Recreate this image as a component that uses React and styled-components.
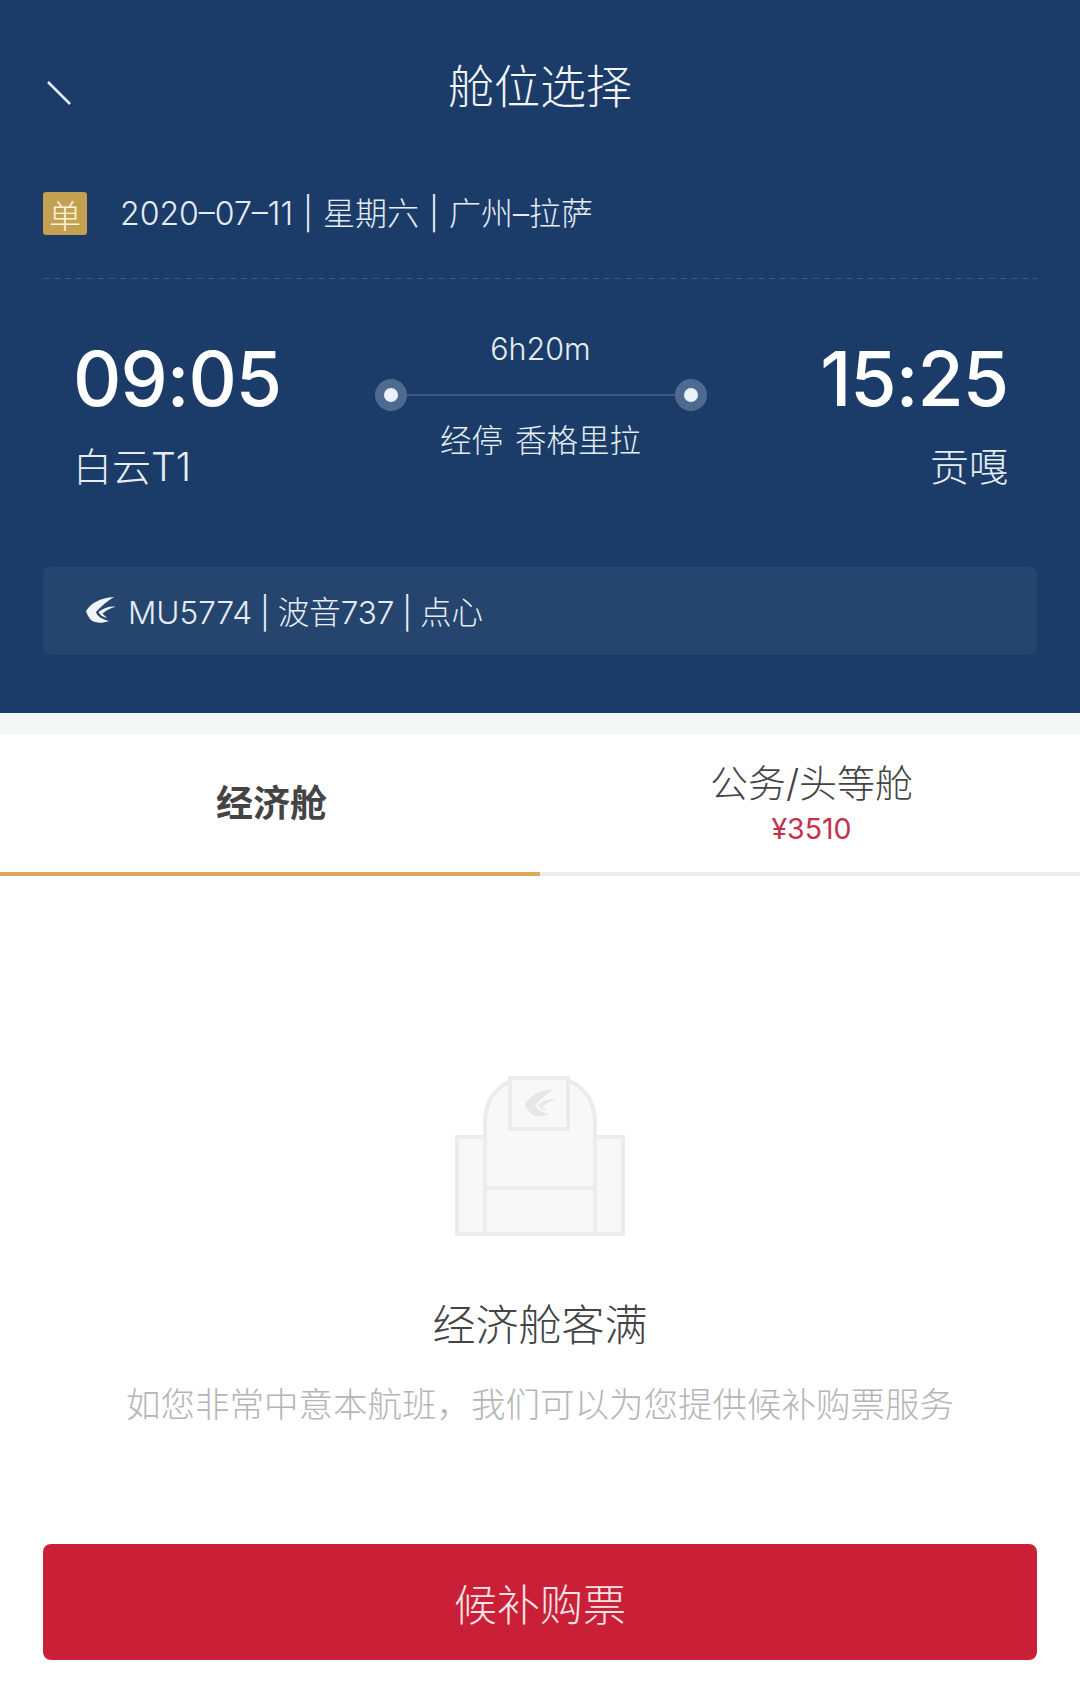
import React from "react";
import styled, { createGlobalStyle } from "styled-components";

const GlobalStyle = createGlobalStyle`
  html, body {
    margin: 0;
    padding: 0;
    background: #fff;
    font-family: Inter, "Noto Sans CJK SC", sans-serif;
    font-weight: 300;
  }
  * { box-sizing: border-box; }
`;

const Swallow = ({ color, size }) => (
  <svg width={size} height={size * 0.87} viewBox="0 0 30 26" fill={color}>
    <path d="M0 14C5 6 14 1 28 0C21 4 16 9 12 13L10 15C11 19 15 22 23 24C16 27 9 26 5 23C3 21 1 17 0 14Z" />
    <path d="M12.500 15C17 11 23 9 30 9.500C24 11.500 19 14 16.500 16.500C17.500 17.800 19 19 21 20.500C17 20.500 14 18 12.500 15Z" />
  </svg>
);

const SeatIcon = () => (
  <SeatSvg width="170" height="160" viewBox="0 0 170 160">
    <g fill="#f8f8f8" stroke="#ececec" strokeWidth="4">
      <rect x="2" y="61" width="30" height="97" />
      <rect x="138" y="61" width="30" height="97" />
      <path d="M30 158V46C30 20 48 2 72 2H98C122 2 140 20 140 46V158Z" />
      <path d="M55 2H113V53H55Z" />
      <path d="M30 112H140" />
    </g>
    <g transform="translate(70 13) scale(1.05)">
      <Swallow color="#e6e6e6" size={30} />
    </g>
  </SeatSvg>
);

const App = () => (
  <>
    <GlobalStyle />
    <Page>
      <Header>
        <TitleBar>
          <BackMark width="24" height="24" viewBox="0 0 24 24">
            <path d="M1 1L23 23" stroke="#e8eef5" strokeWidth="2.500" />
          </BackMark>
          <Title>舱位选择</Title>
        </TitleBar>
        <RouteRow>
          <Badge>单</Badge>
          <RouteText>2020–07–11 | 星期六 | 广州–拉萨</RouteText>
        </RouteRow>
        <Divider />
        <Schedule>
          <Stop>
            <Time>09:05</Time>
            <Airport>白云T1</Airport>
          </Stop>
          <Middle>
            <Duration>6h20m</Duration>
            <Track>
              <Dot />
              <TrackLine />
              <Dot />
            </Track>
            <Via>经停 香格里拉</Via>
          </Middle>
          <Stop $right>
            <Time>15:25</Time>
            <Airport>贡嘎</Airport>
          </Stop>
        </Schedule>
        <FlightBar>
          <Swallow color="#f2f5f8" size={30} />
          <span>MU5774 | 波音737 | 点心</span>
        </FlightBar>
      </Header>
      <Band />
      <Tabs>
        <Tab $active>
          <TabName $active>经济舱</TabName>
        </Tab>
        <Tab>
          <TabName>公务/头等舱</TabName>
          <TabPrice>¥3510</TabPrice>
        </Tab>
      </Tabs>
      <Empty>
        <SeatIcon />
        <EmptyTitle>经济舱客满</EmptyTitle>
        <EmptyText>如您非常中意本航班，我们可以为您提供候补购票服务</EmptyText>
      </Empty>
      <Footer>
        <WaitButton>候补购票</WaitButton>
      </Footer>
    </Page>
  </>
);

const Page = styled.div`
  width: 1080px;
  height: 1682px;
  overflow: hidden;
  background: #fff;
`;

const Header = styled.header`
  height: 713px;
  padding: 0 43px;
  background: #1b3c69;
  color: #e6edf4;
`;

const TitleBar = styled.div`
  position: relative;
  height: 170px;
  padding-bottom: 4px;
  display: flex;
  align-items: center;
  justify-content: center;
`;

const BackMark = styled.svg`
  position: absolute;
  left: 4px;
  top: 81px;
`;

const Title = styled.h1`
  margin: 0;
  font-size: 46px;
  font-weight: 300;
  color: #f4f6f9;
`;

const RouteRow = styled.div`
  display: flex;
  align-items: center;
  gap: 33px;
  height: 43px;
  margin: 22px 0 43px;
`;

const Badge = styled.div`
  width: 44px;
  height: 43px;
  display: flex;
  align-items: center;
  justify-content: center;
  border-radius: 3px;
  background: #c4a052;
  color: #fff4d8;
  font-size: 32px;
`;

const RouteText = styled.div`
  font-size: 32px;
  line-height: 43px;
  white-space: pre;
  word-spacing: 1px;
`;

const Divider = styled.div`
  height: 1px;
  background: repeating-linear-gradient(
    90deg,
    rgba(255, 255, 255, 0.16) 0 6px,
    transparent 6px 11px
  );
`;

const Schedule = styled.div`
  height: 288px;
  display: grid;
  grid-template-columns: 1fr auto 1fr;
  padding: 0 29px 0 30px;
`;

const Stop = styled.div`
  display: flex;
  flex-direction: column;
  align-items: ${(p) => (p.$right ? "flex-end" : "flex-start")};
  padding-top: 51px;
`;

const Time = styled.div`
  font-size: 75px;
  line-height: 98px;
  font-weight: 500;
  color: #fff;
  letter-spacing: -1px;
`;

const Airport = styled.div`
  margin-top: 16px;
  font-size: 39px;
  line-height: 46px;
`;

const Middle = styled.div`
  width: 332px;
  display: flex;
  flex-direction: column;
  align-items: center;
  padding-top: 50px;
`;

const Duration = styled.div`
  font-size: 30.500px;
  line-height: 40px;
`;

const Track = styled.div`
  width: 100%;
  height: 32px;
  margin-top: 10px;
  display: flex;
  align-items: center;
`;

const Dot = styled.span`
  flex: none;
  width: 32px;
  height: 32px;
  border-radius: 50%;
  background: #e9f1fb;
  border: 9px solid #4f6a90;
`;

const TrackLine = styled.span`
  flex: 1;
  height: 2px;
  background: #3c5a84;
`;

const Via = styled.div`
  margin-top: 10px;
  font-size: 31.500px;
  line-height: 40px;
  word-spacing: 3px;
`;

const FlightBar = styled.div`
  height: 88px;
  display: flex;
  align-items: center;
  gap: 12px;
  padding-left: 43px;
  padding-bottom: 2px;
  border-radius: 6px;
  background: #25456f;
  font-size: 31.500px;
  white-space: pre;
  word-spacing: -1px;
`;

const Band = styled.div`
  height: 21px;
  background: #f5f6f7;
`;

const Tabs = styled.div`
  height: 142px;
  display: grid;
  grid-template-columns: 1fr 1fr;
`;

const Tab = styled.div`
  display: flex;
  flex-direction: column;
  align-items: center;
  justify-content: center;
  padding: ${(p) => (p.$active ? "1px 0 0 3px" : "0 0 0 3px")};
  border-bottom: ${(p) => (p.$active ? "4px solid #dca75c" : "4px solid #ececec")};
`;

const TabName = styled.div`
  font-size: ${(p) => (p.$active ? "37px" : "38px")};
  line-height: 46px;
  font-weight: ${(p) => (p.$active ? 700 : 300)};
  color: #444;
`;

const TabPrice = styled.div`
  font-size: 28.500px;
  line-height: 34px;
  margin-top: 6px;
  font-weight: 400;
  color: #c4304d;
`;

const Empty = styled.section`
  height: 668px;
  padding-top: 200px;
  display: flex;
  flex-direction: column;
  align-items: center;
`;

const SeatSvg = styled.svg`
  flex: none;
`;

const EmptyTitle = styled.h2`
  margin: 61px 0 0;
  font-size: 43px;
  line-height: 56px;
  font-weight: 300;
  color: #444;
`;

const EmptyText = styled.p`
  margin: 30px 0 0;
  font-size: 34.500px;
  line-height: 44px;
  font-weight: 300;
  color: #b5b5b5;
`;

const Footer = styled.div`
  padding: 0 43px;
`;

const WaitButton = styled.button`
  width: 100%;
  height: 116px;
  border: 0;
  border-radius: 8px;
  background: #c91f37;
  color: #f6e3e5;
  font-family: inherit;
  font-size: 43px;
  font-weight: 300;
`;

export default App;
